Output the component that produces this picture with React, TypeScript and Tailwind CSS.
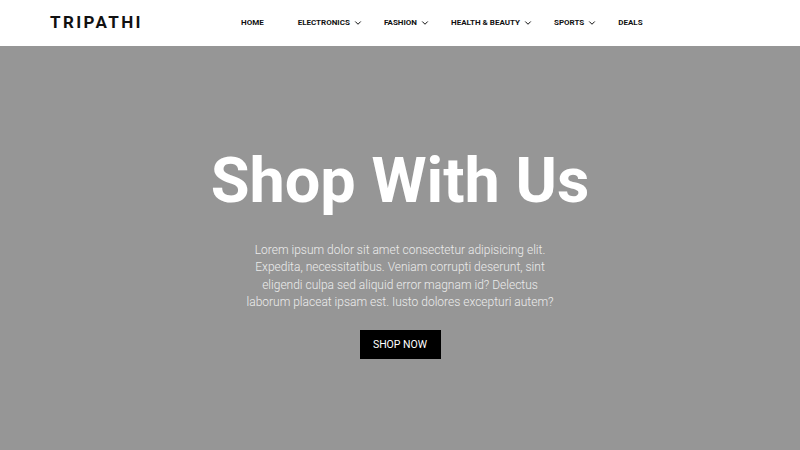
import { ChevronDown } from "lucide-react";

const navItems: { label: string; dropdown: boolean }[] = [
  { label: "HOME", dropdown: false },
  { label: "ELECTRONICS", dropdown: true },
  { label: "FASHION", dropdown: true },
  { label: "HEALTH & BEAUTY", dropdown: true },
  { label: "SPORTS", dropdown: true },
  { label: "DEALS", dropdown: false },
];

export default function App() {
  return (
    <div className="flex h-[450px] w-full flex-col font-['Roboto',sans-serif]">
      <header className="flex h-[46px] shrink-0 items-center bg-white pl-[50px]">
        <div className="w-[191px] text-[17px] font-bold tracking-[0.14em] text-[#111]">TRIPATHI</div>
        <nav className="flex items-center gap-[21px]">
          {navItems.map((item) => (
            <a
              key={item.label}
              href="#"
              className={`flex items-center gap-[3px] text-[8px] font-bold text-[#111] ${item.dropdown ? "" : "pr-[13px]"}`}
            >
              {item.label}
              {item.dropdown ? <ChevronDown className="h-[10px] w-[10px]" strokeWidth={2.4} /> : null}
            </a>
          ))}
        </nav>
      </header>

      <section className="flex flex-1 flex-col items-center bg-[#969696] pt-[103px] text-center">
        <h1 className="text-[63px] font-bold leading-none text-white">Shop With Us</h1>
        <p className="mt-[30px] w-[320px] text-[12px] font-light leading-[17.3px] text-[#ececec]">
          Lorem ipsum dolor sit amet consectetur adipisicing elit. Expedita, necessitatibus. Veniam corrupti deserunt,
          sint eligendi culpa sed aliquid error magnam id? Delectus laborum placeat ipsam est. Iusto dolores excepturi
          autem?
        </p>
        <button className="mt-[19px] h-[29px] w-[81px] bg-black text-[10.5px] text-white">SHOP NOW</button>
      </section>
    </div>
  );
}
